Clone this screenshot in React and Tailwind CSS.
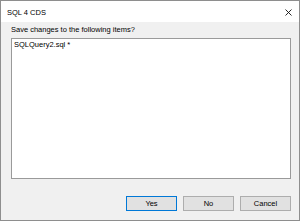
import React from 'react';

const DialogButton = ({ label, isDefault }) => (
    <button
        className={`w-[51px] h-[15px] bg-[#e1e1e1] text-[7.5px] leading-none text-black flex items-center justify-center border ${
            isDefault ? 'border-[#0078d7]' : 'border-[#adadad]'
        }`}
    >
        {label}
    </button>
);

const App = () => {
    return (
        <div
            className="w-[300px] h-[221px] border border-[#8e8e8e] flex flex-col bg-white text-black"
            style={{ fontFamily: '"Liberation Sans", Arial, sans-serif' }}
        >
            <div className="h-[21px] shrink-0 bg-white flex items-center justify-between pl-[6px] pr-[7px]">
                <span className="text-[7.5px] leading-[9px] mt-[1px]">SQL 4 CDS</span>
                <svg width="7" height="7" viewBox="0 0 7 7" className="mt-[1px]">
                    <path d="M0.5 0.5 L6.5 6.5 M6.5 0.5 L0.5 6.5" stroke="#111" strokeWidth="0.9" fill="none" />
                </svg>
            </div>

            <div className="flex-1 bg-[#f0f0f0] flex flex-col pl-[10px] pr-[8px] pt-[3px]">
                <div className="text-[7.5px] leading-[9px] mb-[4px]">Save changes to the following items?</div>
                <div className="h-[141px] shrink-0 bg-white border border-[#9a9a9a] pt-[1px] pl-[2px]">
                    <div className="text-[7.5px] leading-[9px]">SQLQuery2.sql *</div>
                </div>
                <div className="flex justify-end gap-[6px] mt-[17px]">
                    <DialogButton label="Yes" isDefault />
                    <DialogButton label="No" />
                    <DialogButton label="Cancel" />
                </div>
            </div>
        </div>
    );
};

export default App;
